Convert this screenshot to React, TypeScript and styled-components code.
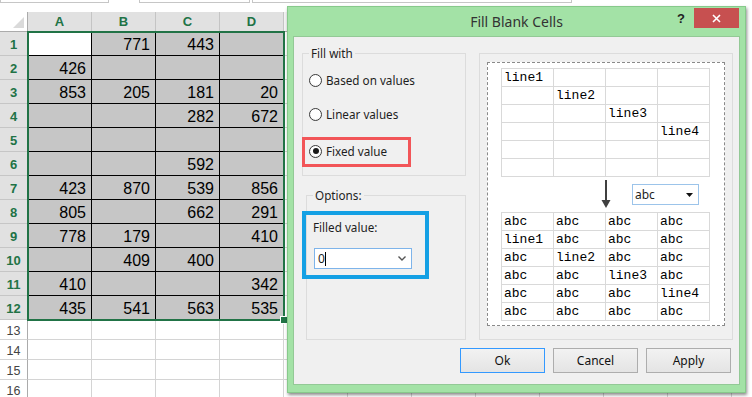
import React from 'react'
import styled, { createGlobalStyle } from 'styled-components'

const UI_FONT = `'Noto Sans', 'Open Sans', sans-serif`
const GRID_FONT = `'Liberation Sans', Arial, sans-serif`
const MONO_FONT = `'Liberation Mono', 'DejaVu Sans Mono', monospace`
const EXCEL_GREEN = '#217346'

const HEAD_W = 28
const HEAD_H = 20
const COL_W = 64
const ROW_H = 24

const ROWS = [
  ['', '771', '443', ''],
  ['426', '', '', ''],
  ['853', '205', '181', '20'],
  ['', '', '282', '672'],
  ['', '', '', ''],
  ['', '', '592', ''],
  ['423', '870', '539', '856'],
  ['805', '', '662', '291'],
  ['778', '179', '', '410'],
  ['', '409', '400', ''],
  ['410', '', '', '342'],
  ['435', '541', '563', '535'],
]

// only A-D show; the rest sit under the dialog
const COLS = ['A', 'B', 'C', 'D', '', '', '', '', '', '', '']
const EXTRA = COLS.slice(4)
const EMPTY_ROWS = [13, 14, 15, 16]

const BEFORE = [
  ['line1', '', '', ''],
  ['', 'line2', '', ''],
  ['', '', 'line3', ''],
  ['', '', '', 'line4'],
  ['', '', '', ''],
  ['', '', '', ''],
]

const AFTER = [
  ['abc', 'abc', 'abc', 'abc'],
  ['line1', 'abc', 'abc', 'abc'],
  ['abc', 'line2', 'abc', 'abc'],
  ['abc', 'abc', 'line3', 'abc'],
  ['abc', 'abc', 'abc', 'line4'],
  ['abc', 'abc', 'abc', 'abc'],
]

const GlobalStyle = createGlobalStyle`
  html, body {
    margin: 0;
    padding: 0;
    background: #fff;
  }
  body {
    width: 752px;
    height: 397px;
    overflow: hidden;
  }
`

export default function App() {
  return (
    <Page>
      <GlobalStyle />
      <NameBar>
        <NameBox $w={109} $ml={0} />
        <NameBox $w={111} $ml={30} />
        <NameBox $w={320} $ml={2} />
      </NameBar>
      <Sheet>
        <Corner />
        {COLS.map((c, i) => (
          <ColHead key={i} $sel={i < 4}>
            {c}
          </ColHead>
        ))}
        {ROWS.map((row, r) => (
          <React.Fragment key={r}>
            <RowHead $sel>{r + 1}</RowHead>
            {row.map((v, c) => (
              <Cell key={c} $tone={r === 0 && c === 0 ? 'active' : 'filled'}>
                {v}
              </Cell>
            ))}
            {EXTRA.map((_, c) => (
              <Cell key={`x${c}`} $tone="blank" />
            ))}
          </React.Fragment>
        ))}
        {EMPTY_ROWS.map((n) => (
          <React.Fragment key={n}>
            <RowHead $sel={false}>{n}</RowHead>
            {COLS.map((_, c) => (
              <Cell key={c} $tone="blank" />
            ))}
          </React.Fragment>
        ))}
        <Selection>
          <FillHandle />
        </Selection>
      </Sheet>

      <Dialog>
        <TitleBar>
          <Title>Fill Blank Cells</Title>
          <TitleControls>
            <Help>?</Help>
            <CloseButton>
              <svg width="9" height="9" viewBox="0 0 9 9">
                <path d="M1 1 L8 8 M8 1 L1 8" stroke="#fff" strokeWidth="1.6" />
              </svg>
            </CloseButton>
          </TitleControls>
        </TitleBar>

        <Body>
          <Panels>
            <LeftCol>
              <Group $h={123}>
                <Legend>Fill with</Legend>
                <RadioList>
                  <RadioRow>
                    <Radio />
                    <span>Based on values</span>
                  </RadioRow>
                  <RadioRow>
                    <Radio />
                    <span>Linear values</span>
                  </RadioRow>
                  <Highlight>
                    <Radio $checked />
                    <span>Fixed value</span>
                  </Highlight>
                </RadioList>
              </Group>
              <OptionsGroup $h={145}>
                <Legend>Options:</Legend>
                <BlueFrame>
                  <FieldLabel>Filled value:</FieldLabel>
                  <ValueInput>
                    <span>0</span>
                    <Caret />
                    <Chevron>
                      <svg width="8" height="5" viewBox="0 0 8 5">
                        <path d="M0.5 0.5 L4 4 L7.5 0.5" fill="none" stroke="#555" strokeWidth="1.4" />
                      </svg>
                    </Chevron>
                  </ValueInput>
                </BlueFrame>
              </OptionsGroup>
            </LeftCol>

            <Group $h={287}>
              <Preview>
                <MiniTable>
                  {BEFORE.flat().map((v, i) => (
                    <MiniCell key={i}>{v}</MiniCell>
                  ))}
                </MiniTable>
                <ArrowRow>
                  <ArrowSlot>
                    <svg width="12" height="30" viewBox="0 0 12 30">
                      <line x1="6" y1="0" x2="6" y2="22" stroke="#404040" strokeWidth="2" />
                      <polygon points="1.5,20 10.5,20 6,28" fill="#404040" />
                    </svg>
                  </ArrowSlot>
                  <Combo>
                    <span>abc</span>
                    <svg width="7" height="4" viewBox="0 0 7 4">
                      <polygon points="0,0 7,0 3.5,4" fill="#111" />
                    </svg>
                  </Combo>
                </ArrowRow>
                <MiniTable>
                  {AFTER.flat().map((v, i) => (
                    <MiniCell key={i}>{v}</MiniCell>
                  ))}
                </MiniTable>
              </Preview>
            </Group>
          </Panels>

          <ButtonRow>
            <Button $focused>Ok</Button>
            <Button>Cancel</Button>
            <Button>Apply</Button>
          </ButtonRow>
        </Body>
      </Dialog>
    </Page>
  )
}

const Page = styled.div`
  position: relative;
  width: 752px;
  height: 397px;
  overflow: hidden;
  background: #fff;
`

/* ---------- spreadsheet ---------- */

const NameBar = styled.div`
  display: flex;
  height: 12px;
`

const NameBox = styled.div<{ $w: number; $ml: number }>`
  width: ${(p) => p.$w}px;
  margin-left: ${(p) => p.$ml}px;
  height: 3px;
  box-sizing: border-box;
  border: 1px solid #c6c6c6;
  border-top: none;
  background: #fff;
`

const Sheet = styled.div`
  display: grid;
  grid-template-columns: ${HEAD_W}px repeat(11, ${COL_W}px);
  grid-template-rows: ${HEAD_H}px repeat(12, ${ROW_H}px) repeat(4, 20px);
  position: relative;
`

const Corner = styled.div`
  position: relative;
  box-sizing: border-box;
  background: #fff;
  border-right: 1px solid #ababab;
  border-bottom: 1px solid #ababab;
  &::after {
    content: '';
    position: absolute;
    right: 3px;
    bottom: 3px;
    border-style: solid;
    border-width: 0 0 11px 11px;
    border-color: transparent transparent #dadada transparent;
  }
`

const ColHead = styled.div<{ $sel: boolean }>`
  box-sizing: border-box;
  display: flex;
  align-items: center;
  justify-content: center;
  background: ${(p) => (p.$sel ? '#e1e1e1' : '#f3f3f3')};
  border-right: 1px solid #c4c4c4;
  border-bottom: 1px solid #ababab;
  font-family: ${GRID_FONT};
  font-size: 13px;
  font-weight: ${(p) => (p.$sel ? 700 : 400)};
  color: ${(p) => (p.$sel ? EXCEL_GREEN : '#444')};
`

const RowHead = styled.div<{ $sel: boolean }>`
  box-sizing: border-box;
  display: flex;
  align-items: center;
  justify-content: center;
  padding-top: 2px;
  background: ${(p) => (p.$sel ? '#e1e1e1' : '#fff')};
  border-right: 1px solid #ababab;
  border-bottom: 1px solid ${(p) => (p.$sel ? '#c6c6c6' : '#d4d4d4')};
  font-family: ${GRID_FONT};
  font-size: ${(p) => (p.$sel ? '13px' : '12.5px')};
  font-weight: ${(p) => (p.$sel ? 700 : 400)};
  color: ${(p) => (p.$sel ? EXCEL_GREEN : '#444')};
`

type Tone = 'active' | 'filled' | 'blank'

const Cell = styled.div<{ $tone: Tone }>`
  box-sizing: border-box;
  display: flex;
  align-items: flex-end;
  justify-content: flex-end;
  padding: 0 5px 1px 0;
  background: ${(p) => (p.$tone === 'filled' ? '#c6c6c6' : '#fff')};
  border-right: 1px solid ${(p) => (p.$tone === 'blank' ? '#d4d4d4' : '#000')};
  border-bottom: 1px solid ${(p) => (p.$tone === 'blank' ? '#d4d4d4' : '#000')};
  font-family: ${GRID_FONT};
  font-size: 16px;
  line-height: 18px;
  color: #000;
`

/* selection outline lies over the A1:D12 cells */
const Selection = styled.div`
  position: absolute;
  left: ${HEAD_W - 1}px;
  top: ${HEAD_H - 1}px;
  width: ${COL_W * 4 + 2}px;
  height: ${ROW_H * 12 + 2}px;
  box-sizing: border-box;
  border: 2px solid ${EXCEL_GREEN};
  pointer-events: none;
`

const FillHandle = styled.div`
  position: absolute;
  right: -4px;
  bottom: -4px;
  width: 6px;
  height: 6px;
  background: ${EXCEL_GREEN};
  box-shadow: 0 0 0 1px #fff;
`

/* ---------- dialog ---------- */

const Dialog = styled.div`
  position: absolute;
  left: 287px;
  top: 6px;
  width: 459px;
  height: 387px;
  box-sizing: border-box;
  display: flex;
  flex-direction: column;
  padding: 0 5px 7px;
  background: #a3e2a6;
  border: 1px solid #87c98b;
  box-shadow: 1px 2px 3px rgba(0, 0, 0, 0.45);
  font-family: ${UI_FONT};
  color: #1e1e1e;
`

const TitleBar = styled.div`
  height: 29px;
  display: grid;
  grid-template-columns: 1fr auto 1fr;
`

const Title = styled.div`
  grid-column: 2;
  font-size: 14px;
  line-height: 29px;
  color: #333;
`

const TitleControls = styled.div`
  grid-column: 3;
  justify-self: end;
  align-self: start;
  display: flex;
  align-items: center;
  margin: 1px 1px 0 0;
`

const Help = styled.span`
  font-family: ${GRID_FONT};
  font-size: 13px;
  font-weight: 700;
  color: #222;
  margin-right: 9px;
`

const CloseButton = styled.div`
  width: 45px;
  height: 20px;
  display: flex;
  align-items: center;
  justify-content: center;
  background: #c75050;
`

const Body = styled.div`
  flex: 1;
  box-sizing: border-box;
  display: flex;
  flex-direction: column;
  padding: 16px 6px 0 8px;
  background: #f0f0f0;
  border: 1px solid #93c996;
`

const Panels = styled.div`
  display: grid;
  grid-template-columns: 164px 254px;
  column-gap: 13px;
  align-items: start;
`

const LeftCol = styled.div`
  display: flex;
  flex-direction: column;
  gap: 19px;
`

const Group = styled.div<{ $h: number }>`
  position: relative;
  box-sizing: border-box;
  height: ${(p) => p.$h}px;
  border: 1px solid #dcdcdc;
`

const OptionsGroup = styled(Group)`
  margin-left: 4px;
  padding-top: 15px;
`

const Legend = styled.span`
  position: absolute;
  top: -9px;
  left: 6px;
  padding: 0 2px;
  background: #f0f0f0;
  font-size: 11.7px;
  line-height: 16px;
  color: #1e1e1e;
`

const RadioList = styled.div`
  display: flex;
  flex-direction: column;
  padding: 9px 0 0 6px;
`

const RadioRow = styled.div`
  height: 34px;
  display: flex;
  align-items: center;
  gap: 4px;
  font-size: 11.7px;
`

const Highlight = styled.div`
  box-sizing: border-box;
  width: 109px;
  height: 30px;
  margin: 6px 0 0 -7px;
  padding: 0 0 2px 4px;
  display: flex;
  align-items: center;
  gap: 4px;
  border: 3px solid #f25558;
  font-size: 11.7px;
`

const Radio = styled.span<{ $checked?: boolean }>`
  position: relative;
  box-sizing: border-box;
  width: 13px;
  height: 13px;
  flex: none;
  border-radius: 50%;
  border: 1px solid #3a3a3a;
  background: radial-gradient(circle at 50% 40%, #fff 55%, #e6e6e6 100%);
  &::after {
    content: '';
    display: ${(p) => (p.$checked ? 'block' : 'none')};
    position: absolute;
    left: 2.5px;
    top: 2.5px;
    width: 6px;
    height: 6px;
    border-radius: 50%;
    background: #1a1a1a;
  }
`

const BlueFrame = styled.div`
  box-sizing: border-box;
  width: 127px;
  height: 68px;
  margin-left: -5px;
  padding: 4px 0 0 7px;
  border: 4px solid #14a0e4;
`

const FieldLabel = styled.div`
  font-size: 11.7px;
  line-height: 16px;
`

const ValueInput = styled.div`
  box-sizing: border-box;
  width: 98px;
  height: 21px;
  margin: 13px 0 0 1px;
  padding-left: 3px;
  display: flex;
  align-items: center;
  background: #fff;
  border: 1px solid #7eb4ea;
  font-size: 12px;
`

const Caret = styled.span`
  width: 1px;
  height: 14px;
  background: #000;
`

const Chevron = styled.span`
  display: flex;
  margin-left: auto;
  margin-right: 5px;
`

const Preview = styled.div`
  box-sizing: border-box;
  width: 238px;
  height: 264px;
  margin: 8px 0 0 7px;
  padding: 5px 0 0 13px;
  background: #fff;
  border: 1px dashed #8a8a8a;
`

const MiniTable = styled.div`
  display: grid;
  grid-template-columns: repeat(4, 52px);
  grid-auto-rows: 18px;
  width: max-content;
  border-left: 1px solid #d9d9d9;
  border-top: 1px solid #d9d9d9;
`

const MiniCell = styled.div`
  box-sizing: border-box;
  padding-left: 2px;
  border-right: 1px solid #d9d9d9;
  border-bottom: 1px solid #d9d9d9;
  font-family: ${MONO_FONT};
  font-size: 13px;
  line-height: 17px;
  color: #000;
  white-space: nowrap;
`

const ArrowRow = styled.div`
  width: 209px;
  height: 35px;
  display: grid;
  grid-template-columns: 1fr auto 1fr;
`

const ArrowSlot = styled.div`
  grid-column: 2;
  padding-top: 3px;
`

const Combo = styled.div`
  grid-column: 3;
  justify-self: end;
  align-self: start;
  box-sizing: border-box;
  width: 67px;
  height: 21px;
  margin: 7px 11px 0 0;
  padding: 0 5px 0 2px;
  display: flex;
  align-items: center;
  justify-content: space-between;
  background: #fff;
  border: 1px solid #9cc4ea;
  font-size: 12px;
`

const ButtonRow = styled.div`
  display: flex;
  justify-content: flex-end;
  gap: 8px;
  margin-top: 8px;
  padding-right: 2px;
`

const Button = styled.div<{ $focused?: boolean }>`
  box-sizing: border-box;
  width: 85px;
  height: 25px;
  display: flex;
  align-items: center;
  justify-content: center;
  background: linear-gradient(#f2f2f2, #e4e4e4);
  border: 1px solid ${(p) => (p.$focused ? '#3399ff' : '#adadad')};
  font-size: 12px;
  color: #111;
`
